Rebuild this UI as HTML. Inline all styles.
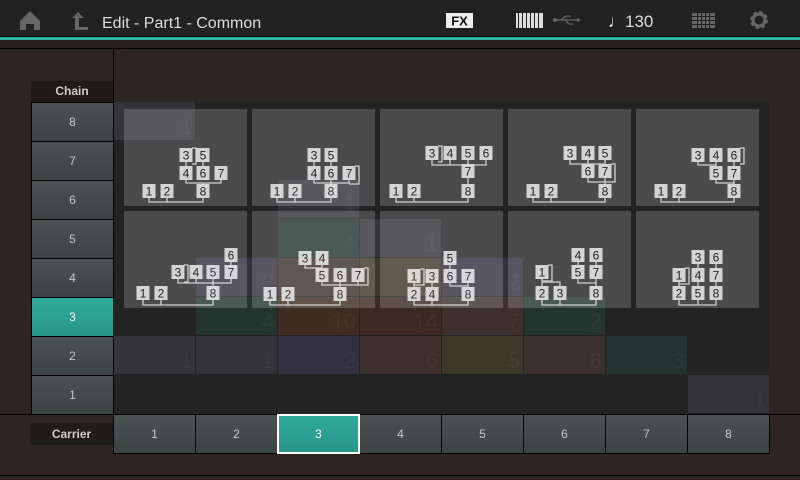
<!DOCTYPE html>
<html><head><meta charset="utf-8"><style>
*{margin:0;padding:0;box-sizing:border-box}
body{width:800px;height:480px;overflow:hidden;background:#2e2422;font-family:"Liberation Sans",sans-serif;position:relative}
.abs{position:absolute}
.btn{position:absolute;background:linear-gradient(#4a5252,#3c4343);border:1px solid #000;color:#c8c8c8;font-size:12px;display:flex;align-items:center;justify-content:center}
.sel{background:linear-gradient(#2eaa9b,#28968a);color:#fff}
.cell{position:absolute;width:81px;height:38px;color:rgba(255,255,255,0.035);font-size:22px;text-align:right;padding-right:3px;line-height:50px;overflow:hidden}
#cells{position:absolute;left:0;top:0;width:800px;height:480px;mix-blend-mode:screen;pointer-events:none}
</style></head><body>
<div class="abs" style="left:0;top:0;width:800px;height:37px;background:#222"></div>
<div class="abs" style="left:0;top:36px;width:800px;height:1px;background:#000"></div>
<div class="abs" style="left:0;top:37px;width:800px;height:3px;background:#2bb5a5"></div>
<div class="abs" style="left:0;top:40px;width:800px;height:8px;background:#2a1f1d"></div>
<div class="abs" style="left:0;top:48px;width:800px;height:1px;background:#000"></div>
<div class="abs" style="left:113px;top:48px;width:1px;height:54px;background:#000"></div>
<div class="abs" style="left:0;top:414px;width:800px;height:1px;background:#000"></div>
<div class="abs" style="left:0;top:475px;width:800px;height:1px;background:#000"></div>

<svg class="abs" style="left:0;top:0" width="800" height="37">
<path d="M20 21L30 11L40 21V30H34V24H26V30H20Z" fill="#666"/>
<path d="M78 12L72 18H75V30H88V27H79V18H84Z" fill="#666"/>
<rect x="446" y="13" width="27" height="15" fill="#eee"/>
<text x="459.5" y="25.5" text-anchor="middle" font-size="13" font-weight="bold" fill="#111" font-family="Liberation Sans">FX</text>
<g fill="#ddd"><rect x="516" y="13" width="27" height="15"/></g>
<g fill="#222"><rect x="518" y="13" width="1" height="15"/><rect x="522" y="13" width="1" height="15"/><rect x="526" y="13" width="1" height="15"/><rect x="530" y="13" width="1" height="15"/><rect x="534" y="13" width="1" height="15"/><rect x="538" y="13" width="1" height="15"/></g>
<path d="M155 20H178M162 20L167 16H172M166 20L170 24H174" transform="translate(399,0)" stroke="#666" stroke-width="1.3" fill="none"/>
<circle cx="555" cy="20" r="2" fill="#666"/><path d="M577 18L581 20L577 22Z" fill="#666"/>
<text x="102" y="28" fill="#ddd" font-size="16" font-family="Liberation Sans">Edit - Part1 - Common</text>
<text x="608" y="27" fill="#eee" font-size="17">♩</text>
<text x="625" y="27" fill="#ddd" font-size="17">130</text>
<g fill="#666"><rect x="692" y="13" width="23" height="15"/></g>
<g fill="#222"><rect x="692" y="16" width="23" height="1"/><rect x="692" y="20" width="23" height="1"/><rect x="692" y="24" width="23" height="1"/><rect x="697" y="13" width="1" height="15"/><rect x="701" y="13" width="1" height="15"/><rect x="705" y="13" width="1" height="15"/><rect x="709" y="13" width="1" height="15"/></g>
<circle cx="759" cy="20" r="7" fill="none" stroke="#666" stroke-width="4" stroke-dasharray="3 2.5"/>
<circle cx="759" cy="20" r="6" fill="none" stroke="#666" stroke-width="3"/>
</svg>

<div class="abs" style="left:31px;top:81px;width:82px;height:21px;background:#1f1b19;color:#ccc;font-size:12px;font-weight:bold;text-align:center;line-height:21px">Chain</div>
<div class="btn" style="left:31px;top:102px;width:83px;height:40px">8</div>
<div class="btn" style="left:31px;top:141px;width:83px;height:40px">7</div>
<div class="btn" style="left:31px;top:180px;width:83px;height:40px">6</div>
<div class="btn" style="left:31px;top:219px;width:83px;height:40px">5</div>
<div class="btn" style="left:31px;top:258px;width:83px;height:40px">4</div>
<div class="btn sel" style="left:31px;top:297px;width:83px;height:40px">3</div>
<div class="btn" style="left:31px;top:336px;width:83px;height:40px">2</div>
<div class="btn" style="left:31px;top:375px;width:83px;height:40px">1</div>

<div class="abs" style="left:114px;top:102px;width:655px;height:312px;background:#232323"></div>

<svg class="abs" style="left:0;top:0" width="800" height="480" font-family="Liberation Sans" font-size="12">
<g fill="#4b4b4b">
<rect x="124" y="109" width="123" height="97"/><rect x="252" y="109" width="123" height="97"/><rect x="380" y="109" width="123" height="97"/><rect x="508" y="109" width="123" height="97"/><rect x="636" y="109" width="123" height="97"/>
<rect x="124" y="211" width="123" height="97"/><rect x="252" y="211" width="123" height="97"/><rect x="380" y="211" width="123" height="97"/><rect x="508" y="211" width="123" height="97"/><rect x="636" y="211" width="123" height="97"/>
</g>
<g stroke="#d0d0d0" stroke-width="1.3" fill="none">
<path d="M186 162V166 M203 162V166 M186 180V183H221V180 M203 183V184 M149 198V202H203V198 M167 198V202 M192 148H196V164H192"/>
<path d="M314 162V166 M331 162V166 M314 180V183H349V180 M331 180V184 M277 198V202H331V198 M295 198V202 M355 166H359V184H349"/>
<path d="M432 160V165H486V160 M450 160V165 M468 160V164 M468 178V184 M396 198V202H468V198 M414 198V202 M438 146H442V162H438"/>
<path d="M570 160V164H605V160 M588 160V164 M588 178V182H605V178 M605 182V184 M533 198V202H605V198 M551 198V202 M611 164H615V182H605"/>
<path d="M698 162V165H716V162 M716 165V166 M734 162V166 M716 180V183H734V180 M734 183V184 M661 198V202H734V198 M679 198V202 M740 148H744V164H740"/>
<path d="M231 262V265 M178 279V283H231V279 M196 279V283 M213 279V286 M143 300V305H213V300 M161 300V305 M184 265H188V282H184"/>
<path d="M305 265V268H322 M322 265V268 M322 282V285H358V282 M340 282V287 M270 301V305H340V301 M288 301V305 M364 268H368V285H358"/>
<path d="M450 265V269 M414 283V287 M432 283V287 M450 283V286H468V283 M468 286V287 M414 301V305H468V301 M432 301V305 M420 269H424V285H414"/>
<path d="M578 262V265 M596 262V265 M542 279V286 M542 282H560V286 M578 279V283H596V279 M596 283V286 M542 300V305H596V300 M560 300V305 M548 265H552V281H542"/>
<path d="M698 264V268 M716 264V268 M679 282V286 M698 282V286 M716 282V286 M679 300V305H716V300 M698 300V305 M685 268H689V284H679"/>
</g>
<g fill="#d4d4d4">
<rect x="179.5" y="148" width="13" height="14"/><rect x="196.5" y="148" width="13" height="14"/><rect x="179.5" y="166" width="13" height="14"/><rect x="196.5" y="166" width="13" height="14"/><rect x="214.5" y="166" width="13" height="14"/><rect x="142.5" y="184" width="13" height="14"/><rect x="160.5" y="184" width="13" height="14"/><rect x="196.5" y="184" width="13" height="14"/>
<rect x="307.5" y="148" width="13" height="14"/><rect x="324.5" y="148" width="13" height="14"/><rect x="307.5" y="166" width="13" height="14"/><rect x="324.5" y="166" width="13" height="14"/><rect x="342.5" y="166" width="13" height="14"/><rect x="270.5" y="184" width="13" height="14"/><rect x="288.5" y="184" width="13" height="14"/><rect x="324.5" y="184" width="13" height="14"/>
<rect x="425.5" y="146" width="13" height="14"/><rect x="443.5" y="146" width="13" height="14"/><rect x="461.5" y="146" width="13" height="14"/><rect x="479.5" y="146" width="13" height="14"/><rect x="461.5" y="164" width="13" height="14"/><rect x="389.5" y="184" width="13" height="14"/><rect x="407.5" y="184" width="13" height="14"/><rect x="461.5" y="184" width="13" height="14"/>
<rect x="563.5" y="146" width="13" height="14"/><rect x="581.5" y="146" width="13" height="14"/><rect x="598.5" y="146" width="13" height="14"/><rect x="581.5" y="164" width="13" height="14"/><rect x="598.5" y="164" width="13" height="14"/><rect x="526.5" y="184" width="13" height="14"/><rect x="544.5" y="184" width="13" height="14"/><rect x="598.5" y="184" width="13" height="14"/>
<rect x="691.5" y="148" width="13" height="14"/><rect x="709.5" y="148" width="13" height="14"/><rect x="727.5" y="148" width="13" height="14"/><rect x="709.5" y="166" width="13" height="14"/><rect x="727.5" y="166" width="13" height="14"/><rect x="654.5" y="184" width="13" height="14"/><rect x="672.5" y="184" width="13" height="14"/><rect x="727.5" y="184" width="13" height="14"/>
<rect x="224.5" y="248" width="13" height="14"/><rect x="171.5" y="265" width="13" height="14"/><rect x="189.5" y="265" width="13" height="14"/><rect x="206.5" y="265" width="13" height="14"/><rect x="224.5" y="265" width="13" height="14"/><rect x="136.5" y="286" width="13" height="14"/><rect x="154.5" y="286" width="13" height="14"/><rect x="206.5" y="286" width="13" height="14"/>
<rect x="298.5" y="251" width="13" height="14"/><rect x="315.5" y="251" width="13" height="14"/><rect x="315.5" y="268" width="13" height="14"/><rect x="333.5" y="268" width="13" height="14"/><rect x="351.5" y="268" width="13" height="14"/><rect x="263.5" y="287" width="13" height="14"/><rect x="281.5" y="287" width="13" height="14"/><rect x="333.5" y="287" width="13" height="14"/>
<rect x="443.5" y="251" width="13" height="14"/><rect x="407.5" y="269" width="13" height="14"/><rect x="425.5" y="269" width="13" height="14"/><rect x="443.5" y="269" width="13" height="14"/><rect x="461.5" y="269" width="13" height="14"/><rect x="407.5" y="287" width="13" height="14"/><rect x="425.5" y="287" width="13" height="14"/><rect x="461.5" y="287" width="13" height="14"/>
<rect x="571.5" y="248" width="13" height="14"/><rect x="589.5" y="248" width="13" height="14"/><rect x="535.5" y="265" width="13" height="14"/><rect x="571.5" y="265" width="13" height="14"/><rect x="589.5" y="265" width="13" height="14"/><rect x="535.5" y="286" width="13" height="14"/><rect x="553.5" y="286" width="13" height="14"/><rect x="589.5" y="286" width="13" height="14"/>
<rect x="691.5" y="250" width="13" height="14"/><rect x="709.5" y="250" width="13" height="14"/><rect x="672.5" y="268" width="13" height="14"/><rect x="691.5" y="268" width="13" height="14"/><rect x="709.5" y="268" width="13" height="14"/><rect x="672.5" y="286" width="13" height="14"/><rect x="691.5" y="286" width="13" height="14"/><rect x="709.5" y="286" width="13" height="14"/>
</g>
<g fill="#222" text-anchor="middle">
<text x="186" y="159.5">3</text><text x="203" y="159.5">5</text><text x="186" y="177.5">4</text><text x="203" y="177.5">6</text><text x="221" y="177.5">7</text><text x="149" y="195.5">1</text><text x="167" y="195.5">2</text><text x="203" y="195.5">8</text>
<text x="314" y="159.5">3</text><text x="331" y="159.5">5</text><text x="314" y="177.5">4</text><text x="331" y="177.5">6</text><text x="349" y="177.5">7</text><text x="277" y="195.5">1</text><text x="295" y="195.5">2</text><text x="331" y="195.5">8</text>
<text x="432" y="157.5">3</text><text x="450" y="157.5">4</text><text x="468" y="157.5">5</text><text x="486" y="157.5">6</text><text x="468" y="175.5">7</text><text x="396" y="195.5">1</text><text x="414" y="195.5">2</text><text x="468" y="195.5">8</text>
<text x="570" y="157.5">3</text><text x="588" y="157.5">4</text><text x="605" y="157.5">5</text><text x="588" y="175.5">6</text><text x="605" y="175.5">7</text><text x="533" y="195.5">1</text><text x="551" y="195.5">2</text><text x="605" y="195.5">8</text>
<text x="698" y="159.5">3</text><text x="716" y="159.5">4</text><text x="734" y="159.5">6</text><text x="716" y="177.5">5</text><text x="734" y="177.5">7</text><text x="661" y="195.5">1</text><text x="679" y="195.5">2</text><text x="734" y="195.5">8</text>
<text x="231" y="259.5">6</text><text x="178" y="276.5">3</text><text x="196" y="276.5">4</text><text x="213" y="276.5">5</text><text x="231" y="276.5">7</text><text x="143" y="297.5">1</text><text x="161" y="297.5">2</text><text x="213" y="297.5">8</text>
<text x="305" y="262.5">3</text><text x="322" y="262.5">4</text><text x="322" y="279.5">5</text><text x="340" y="279.5">6</text><text x="358" y="279.5">7</text><text x="270" y="298.5">1</text><text x="288" y="298.5">2</text><text x="340" y="298.5">8</text>
<text x="450" y="262.5">5</text><text x="414" y="280.5">1</text><text x="432" y="280.5">3</text><text x="450" y="280.5">6</text><text x="468" y="280.5">7</text><text x="414" y="298.5">2</text><text x="432" y="298.5">4</text><text x="468" y="298.5">8</text>
<text x="578" y="259.5">4</text><text x="596" y="259.5">6</text><text x="542" y="276.5">1</text><text x="578" y="276.5">5</text><text x="596" y="276.5">7</text><text x="542" y="297.5">2</text><text x="560" y="297.5">3</text><text x="596" y="297.5">8</text>
<text x="698" y="261.5">3</text><text x="716" y="261.5">6</text><text x="679" y="279.5">1</text><text x="698" y="279.5">4</text><text x="716" y="279.5">7</text><text x="679" y="297.5">2</text><text x="698" y="297.5">5</text><text x="716" y="297.5">8</text>
</g>
</svg>

<div id="cells">
<div class="cell" style="left:114px;top:102px;background:rgb(18,18,24)">1</div>
<div class="cell" style="left:278px;top:180px;background:rgb(18,18,24)">1</div>
<div class="cell" style="left:278px;top:219px;background:rgb(1,21,15)">4</div>
<div class="cell" style="left:360px;top:219px;background:rgb(18,18,24)">1</div>
<div class="cell" style="left:196px;top:258px;background:rgb(18,15,33)">2</div>
<div class="cell" style="left:278px;top:258px;background:rgb(30,15,12)"></div>
<div class="cell" style="left:360px;top:258px;background:rgb(30,24,6)"></div>
<div class="cell" style="left:442px;top:258px;background:rgb(18,15,33)">2</div>
<div class="cell" style="left:196px;top:297px;background:rgb(1,21,15)">4</div>
<div class="cell" style="left:278px;top:297px;background:rgb(32,12,0)">10</div>
<div class="cell" style="left:360px;top:297px;background:rgb(30,7,0)">14</div>
<div class="cell" style="left:442px;top:297px;background:rgb(30,15,12)">7</div>
<div class="cell" style="left:524px;top:297px;background:rgb(1,21,15)">2</div>
<div class="cell" style="left:114px;top:336px;background:rgb(18,18,24)">1</div>
<div class="cell" style="left:196px;top:336px;background:rgb(18,18,24)">1</div>
<div class="cell" style="left:278px;top:336px;background:rgb(18,15,33)">2</div>
<div class="cell" style="left:360px;top:336px;background:rgb(30,15,12)">6</div>
<div class="cell" style="left:442px;top:336px;background:rgb(30,24,6)">5</div>
<div class="cell" style="left:524px;top:336px;background:rgb(30,16,14)">8</div>
<div class="cell" style="left:606px;top:336px;background:rgb(1,18,15)">3</div>
<div class="cell" style="left:688px;top:375px;background:rgb(18,18,24)">1</div>
</div>

<div class="abs" style="left:30px;top:423px;width:83px;height:22px;background:#201c1a;color:#ccc;font-size:12px;font-weight:bold;text-align:center;line-height:22px">Carrier</div>
<div class="btn" style="left:113px;top:414px;width:83px;height:40px">1</div>
<div class="btn" style="left:195px;top:414px;width:83px;height:40px">2</div>
<div class="btn" style="left:359px;top:414px;width:83px;height:40px">4</div>
<div class="btn" style="left:441px;top:414px;width:83px;height:40px">5</div>
<div class="btn" style="left:523px;top:414px;width:83px;height:40px">6</div>
<div class="btn" style="left:605px;top:414px;width:83px;height:40px">7</div>
<div class="btn" style="left:687px;top:414px;width:83px;height:40px">8</div>
<div class="btn sel" style="left:277px;top:414px;width:83px;height:40px;border:2px solid #fff">3</div>
</body></html>
